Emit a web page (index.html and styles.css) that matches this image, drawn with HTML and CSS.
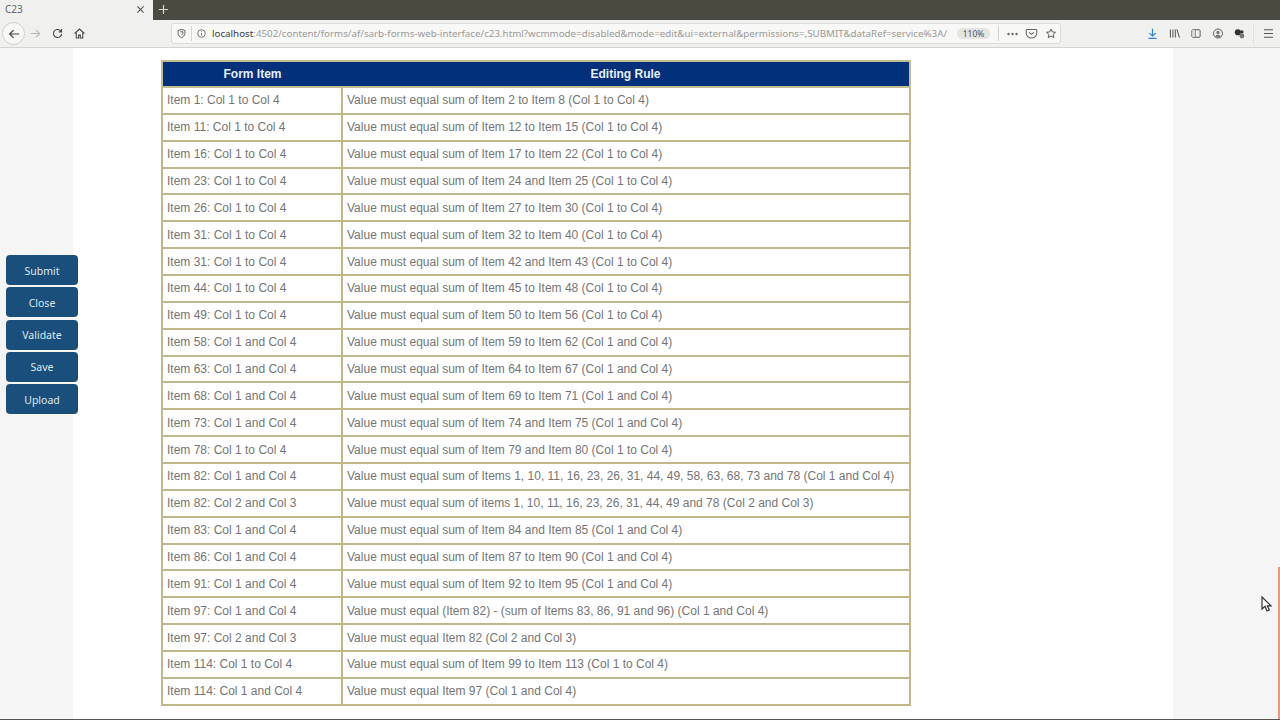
FILE: index.html
```html
<!DOCTYPE html>
<html lang="en">
<head>
<meta charset="utf-8">
<title>C23</title>
<link rel="stylesheet" href="styles.css">
</head>
<body>
<div class="tabbar">
  <div class="tab"><span class="tab-title">C23</span>
    <svg class="tab-close" viewBox="0 0 10 10"><path d="M1.5 1.5l7 7M8.5 1.5l-7 7"/></svg>
  </div>
  <svg class="new-tab" viewBox="0 0 12 12"><path d="M6 1v10M1 6h10"/></svg>
</div>
<div class="toolbar">
  <div class="back"><svg viewBox="0 0 16 16"><path d="M14 8H3M7.5 3.5L3 8l4.500 4.500"/></svg></div>
  <svg class="ic fwd" viewBox="0 0 16 16"><path d="M2 8h11M8.500 3.500L13 8l-4.500 4.500"/></svg>
  <svg class="ic reload" viewBox="0 0 16 16"><path d="M13 8.500A5 5 0 1 1 11.300 4.200L13 6M13 2.500V6H9.500"/></svg>
  <svg class="ic home" viewBox="0 0 16 16"><path d="M2 8l6-5.500L14 8M4 7v6.500h3V10h2v3.500h3V7"/></svg>
  <div class="urlbar">
    <svg class="ic shield" viewBox="0 0 16 16"><path d="M8 2l5 1.500v4c0 3.500-2.500 5.500-5 6.500-2.500-1-5-3-5-6.500v-4zM6 5.500h4v3l-2 2"/></svg>
    <span class="sep"></span>
    <svg class="ic info" viewBox="0 0 16 16"><circle cx="8" cy="8" r="5.500"/><path d="M8 7.500v3.500M8 5v1"/></svg>
    <span class="url"><b>localhost</b>:4502/content/forms/af/sarb-forms-web-interface/c23.html?wcmmode=disabled&amp;mode=edit&amp;ui=external&amp;permissions=,SUBMIT&amp;dataRef=service%3A/</span>
    <span class="zoom">110%</span>
    <span class="sep sep2"></span>
    <svg class="dots" viewBox="0 0 11 4"><circle cx="1.500" cy="2" r="1.200"/><circle cx="5.500" cy="2" r="1.200"/><circle cx="9.500" cy="2" r="1.200"/></svg>
    <svg class="ic pocket" viewBox="0 0 16 16"><path d="M2.500 3h11a1 1 0 0 1 1 1v3.500a6.500 6 0 0 1-13 0V4a1 1 0 0 1 1-1zM5 6.500l3 2.500 3-2.500"/></svg>
    <svg class="ic star" viewBox="0 0 16 16"><path d="M8 2l1.800 3.900 4.200.5-3.100 2.900.8 4.200L8 11.400l-3.700 2.100.8-4.200L2 6.400l4.200-.5z"/></svg>
  </div>
  <div class="tools">
    <svg class="ic dl" viewBox="0 0 16 16"><path d="M8 2v9M4 7.500L8 11l4-3.500M3 14h10"/></svg>
    <svg class="ic lib" viewBox="0 0 16 16"><path d="M3 3v10M6 3v10M9 3v10M11 3l3 10"/></svg>
    <svg class="ic side" viewBox="0 0 16 16"><rect x="2.500" y="3" width="11" height="10" rx="1.500"/><path d="M7 3v10"/><path class="fill" d="M3 3.500h4v9H3z"/></svg>
    <svg class="ic acct" viewBox="0 0 16 16"><circle cx="8" cy="8" r="6"/><circle class="fill" cx="8" cy="6.500" r="2.200"/><path class="fill" d="M4.300 12c.6-2 2-2.500 3.700-2.500s3.100.5 3.700 2.500c-2 1.500-5.400 1.500-7.400 0z"/></svg>
    <svg class="ic ext" viewBox="0 0 16 16"><circle class="dark" cx="6" cy="6.500" r="3.800"/><circle class="dark" cx="11" cy="6" r="2"/><circle class="mid" cx="11" cy="11" r="3"/></svg>
    <span class="tool-sep"></span>
    <svg class="ic menu" viewBox="0 0 16 16"><path d="M2.500 3.500h11M2.500 8h11M2.500 12.500h11"/></svg>
  </div>
</div>
<main class="page">
  <div class="sheet">
    <table class="rules">
      <thead><tr><th class="c1">Form Item</th><th class="c2">Editing Rule</th></tr></thead>
      <tbody>
        <tr><td>Item 1: Col 1 to Col 4</td><td>Value must equal sum of Item 2 to Item 8 (Col 1 to Col 4)</td></tr>
        <tr><td>Item 11: Col 1 to Col 4</td><td>Value must equal sum of Item 12 to Item 15 (Col 1 to Col 4)</td></tr>
        <tr><td>Item 16: Col 1 to Col 4</td><td>Value must equal sum of Item 17 to Item 22 (Col 1 to Col 4)</td></tr>
        <tr><td>Item 23: Col 1 to Col 4</td><td>Value must equal sum of Item 24 and Item 25 (Col 1 to Col 4)</td></tr>
        <tr><td>Item 26: Col 1 to Col 4</td><td>Value must equal sum of Item 27 to Item 30 (Col 1 to Col 4)</td></tr>
        <tr><td>Item 31: Col 1 to Col 4</td><td>Value must equal sum of Item 32 to Item 40 (Col 1 to Col 4)</td></tr>
        <tr><td>Item 31: Col 1 to Col 4</td><td>Value must equal sum of Item 42 and Item 43 (Col 1 to Col 4)</td></tr>
        <tr><td>Item 44: Col 1 to Col 4</td><td>Value must equal sum of Item 45 to Item 48 (Col 1 to Col 4)</td></tr>
        <tr><td>Item 49: Col 1 to Col 4</td><td>Value must equal sum of Item 50 to Item 56 (Col 1 to Col 4)</td></tr>
        <tr><td>Item 58: Col 1 and Col 4</td><td>Value must equal sum of Item 59 to Item 62 (Col 1 and Col 4)</td></tr>
        <tr><td>Item 63: Col 1 and Col 4</td><td>Value must equal sum of Item 64 to Item 67 (Col 1 and Col 4)</td></tr>
        <tr><td>Item 68: Col 1 and Col 4</td><td>Value must equal sum of Item 69 to Item 71 (Col 1 and Col 4)</td></tr>
        <tr><td>Item 73: Col 1 and Col 4</td><td>Value must equal sum of Item 74 and Item 75 (Col 1 and Col 4)</td></tr>
        <tr><td>Item 78: Col 1 to Col 4</td><td>Value must equal sum of Item 79 and Item 80 (Col 1 to Col 4)</td></tr>
        <tr><td>Item 82: Col 1 and Col 4</td><td>Value must equal sum of Items 1, 10, 11, 16, 23, 26, 31, 44, 49, 58, 63, 68, 73 and 78 (Col 1 and Col 4)</td></tr>
        <tr><td>Item 82: Col 2 and Col 3</td><td>Value must equal sum of items 1, 10, 11, 16, 23, 26, 31, 44, 49 and 78 (Col 2 and Col 3)</td></tr>
        <tr><td>Item 83: Col 1 and Col 4</td><td>Value must equal sum of Item 84 and Item 85 (Col 1 and Col 4)</td></tr>
        <tr><td>Item 86: Col 1 and Col 4</td><td>Value must equal sum of Item 87 to Item 90 (Col 1 and Col 4)</td></tr>
        <tr><td>Item 91: Col 1 and Col 4</td><td>Value must equal sum of Item 92 to Item 95 (Col 1 and Col 4)</td></tr>
        <tr><td>Item 97: Col 1 and Col 4</td><td>Value must equal (Item 82) - (sum of Items 83, 86, 91 and 96) (Col 1 and Col 4)</td></tr>
        <tr><td>Item 97: Col 2 and Col 3</td><td>Value must equal Item 82 (Col 2 and Col 3)</td></tr>
        <tr><td>Item 114: Col 1 to Col 4</td><td>Value must equal sum of Item 99 to Item 113 (Col 1 to Col 4)</td></tr>
        <tr><td>Item 114: Col 1 and Col 4</td><td>Value must equal Item 97 (Col 1 and Col 4)</td></tr>
      </tbody>
    </table>
  </div>
  <div class="actions">
    <button class="action">Submit</button>
    <button class="action">Close</button>
    <button class="action">Validate</button>
    <button class="action">Save</button>
    <button class="action">Upload</button>
  </div>
  <div class="scroll-thumb"></div>
  <svg class="cursor" viewBox="0 0 11 16"><path d="M1 1v12l3-2.800L6 15l2.300-1L6.300 9.800H10z"/></svg>
</main>
</body>
</html>
```
FILE: styles.css
```css
* { box-sizing: border-box; }
html, body { margin: 0; height: 100%; overflow: hidden; }
body {
  display: flex;
  flex-direction: column;
  width: 1280px;
  height: 720px;
  font-family: "Liberation Sans", Arial, sans-serif;
  background: #f5f5f5;
}
svg { display: block; flex: none; }

.tabbar {
  height: 20px;
  flex: none;
  display: flex;
  align-items: center;
  background: #4b4a40;
}
.tab {
  width: 153px;
  height: 20px;
  padding: 0 8px 2px 5px;
  display: flex;
  align-items: center;
  justify-content: space-between;
  background: #f0f0ee;
}
.tab-title { font: 10px "Noto Sans", sans-serif; color: #666; }
.tab-close { width: 9px; height: 9px; fill: none; stroke: #555; stroke-width: 1.2; }
.new-tab { width: 11px; height: 11px; margin: 0 0 2px 5px; fill: none; stroke: #d8d8d2; stroke-width: 1.3; }

.toolbar {
  height: 28px;
  flex: none;
  display: flex;
  align-items: center;
  background: #f0f0ee;
  border-bottom: 1px solid #d4d4d2;
}
.ic { width: 13px; height: 13px; fill: none; stroke: #5a5a5a; stroke-width: 1.300; }
.back {
  flex: none;
  width: 23px;
  height: 23px;
  margin-left: 2px;
  display: flex;
  align-items: center;
  justify-content: center;
  border: 1px solid #cfcfcd;
  border-radius: 50%;
  background: #f7f7f6;
}
.back svg { width: 14px; height: 14px; fill: none; stroke: #444; stroke-width: 1.400; }
.fwd { margin-left: 4px; stroke: #b5b5b3; }
.reload { margin-left: 9px; stroke: #444; }
.home { margin-left: 9px; stroke: #444; }
.urlbar {
  flex: none;
  width: 890px;
  height: 21px;
  margin-left: 85px;
  padding: 0 4px;
  display: flex;
  align-items: center;
  background: #f8f8f7;
  border: 1px solid #dcdcda;
  border-radius: 3px;
}
.shield { width: 11px; height: 11px; stroke: #555; }
.sep { width: 1px; height: 15px; margin: 0 4px; background: #d4d4d2; flex: none; }
.info { width: 11px; height: 11px; stroke: #666; }
.url {
  width: 735px;
  margin-left: 5px;
  flex: none;
  overflow: hidden;
  white-space: nowrap;
  font: 9.770px "Noto Sans", sans-serif;
  color: #9a9a98;
}
.url b { font-weight: 400; color: #3e3e3e; }
.zoom {
  width: 33px;
  height: 11px;
  margin-left: 10px;
  flex: none;
  border-radius: 6px;
  background: #e4e4e2;
  font: 8.500px/11px "Noto Sans", sans-serif;
  text-align: center;
  color: #555;
}
.sep2 { margin: 0 8px; }
.dots { width: 11px; height: 4px; fill: #666; }
.pocket { margin-left: 7px; stroke: #666; }
.star { margin-left: 7px; width: 12px; stroke: #555; }
.tools {
  flex: 1;
  min-width: 0;
  display: flex;
  align-items: center;
  padding-left: 85px;
}
.dl { stroke: #2a84d8; stroke-width: 1.500; }
.lib { margin-left: 9px; }
.side { margin-left: 9px; width: 12px; }
.side .fill { fill: #dcdcda; stroke: none; }
.acct { margin-left: 10px; width: 12px; }
.acct .fill { fill: #777; stroke: none; }
.ext { margin-left: 9px; stroke: none; }
.ext .dark { fill: #333; }
.ext .mid { fill: #777; }
.tool-sep { width: 1px; height: 20px; margin-left: 7px; background: #e0e0de; flex: none; }
.menu { margin-left: 8px; stroke: #555; }

.page {
  position: relative;
  flex: 1;
  padding-left: 73px;
  background: #f5f5f5;
  border-bottom: 1px solid #555;
  overflow: hidden;
}
.sheet {
  width: 1100px;
  height: 100%;
  padding: 12px 0 0 88px;
  background: #fff;
}
.rules {
  width: 750px;
  border-collapse: collapse;
  table-layout: fixed;
  font-size: 12px;
  color: #757575;
}
.rules th {
  height: 26px;
  padding: 0;
  background: #02307a;
  color: #e8eef8;
  font-size: 12px;
  font-weight: 700;
  text-align: center;
  border: 2px solid #c4bd92;
}
.rules th.c1 { width: 180px; border-right: 0; }
.rules th.c2 { border-left: 0; }
.rules td {
  height: 26.870px;
  padding: 0 4px;
  border: 2px solid #c0b88a;
  white-space: nowrap;
}

.actions {
  position: absolute;
  left: 6px;
  top: 207px;
  display: flex;
  flex-direction: column;
  gap: 2.300px;
}
.action {
  width: 72px;
  height: 30px;
  padding: 1px 0 0;
  border: 0;
  border-radius: 4px;
  background: #1b4f7b;
  color: #dbe8f2;
  font: 10.500px "Noto Sans", sans-serif;
}
.scroll-thumb {
  position: absolute;
  right: 0;
  top: 519px;
  width: 2px;
  height: 152px;
  background: #e79a7c;
}
.cursor {
  position: absolute;
  left: 1261px;
  top: 548px;
  width: 11px;
  height: 16px;
  fill: #fff;
  stroke: #333;
  stroke-width: 1.200;
}
```
